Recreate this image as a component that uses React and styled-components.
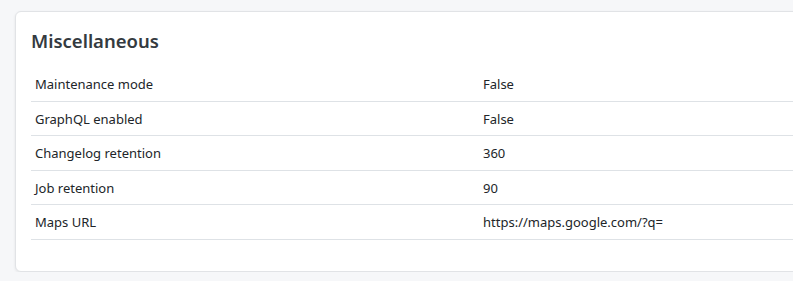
import styled, { createGlobalStyle } from 'styled-components';

const GlobalStyle = createGlobalStyle`
  body {
    margin: 0;
    background: #f6f7f9;
    font-family: 'Noto Sans', 'Open Sans', sans-serif;
    color: #212529;
    overflow: hidden;
  }
`;

const Page = styled.div`
  padding: 11px 0 0 15px;
`;

const Card = styled.section`
  width: 896px;
  background: #fff;
  border: 1px solid #e1e3e6;
  border-radius: 6px;
  box-shadow: 0 1px 3px rgba(0, 0, 0, 0.08);
  padding: 14px 15px 31px;
`;

const Title = styled.h2`
  margin: 0 0 11px;
  font-size: 18.5px;
  font-weight: 600;
  line-height: 30px;
  color: #343a40;
`;

const Table = styled.table`
  width: 100%;
  border-collapse: collapse;
  table-layout: fixed;
  font-size: 13px;
`;

const Cell = styled.td`
  padding: 8px 4px 6px;
  line-height: 19.5px;
  border-bottom: 1px solid #dee2e6;
  vertical-align: middle;
`;

const rows = [
  ['Maintenance mode', 'False'],
  ['GraphQL enabled', 'False'],
  ['Changelog retention', '360'],
  ['Job retention', '90'],
  ['Maps URL', 'https://maps.google.com/?q='],
];

const App = () => {
  return (
    <Page>
      <GlobalStyle />
      <Card>
        <Title>Miscellaneous</Title>
        <Table>
          <tbody>
            {rows.map(([label, value]) => (
              <tr key={label}>
                <Cell>{label}</Cell>
                <Cell>{value}</Cell>
              </tr>
            ))}
          </tbody>
        </Table>
      </Card>
    </Page>
  );
};

export default App;
